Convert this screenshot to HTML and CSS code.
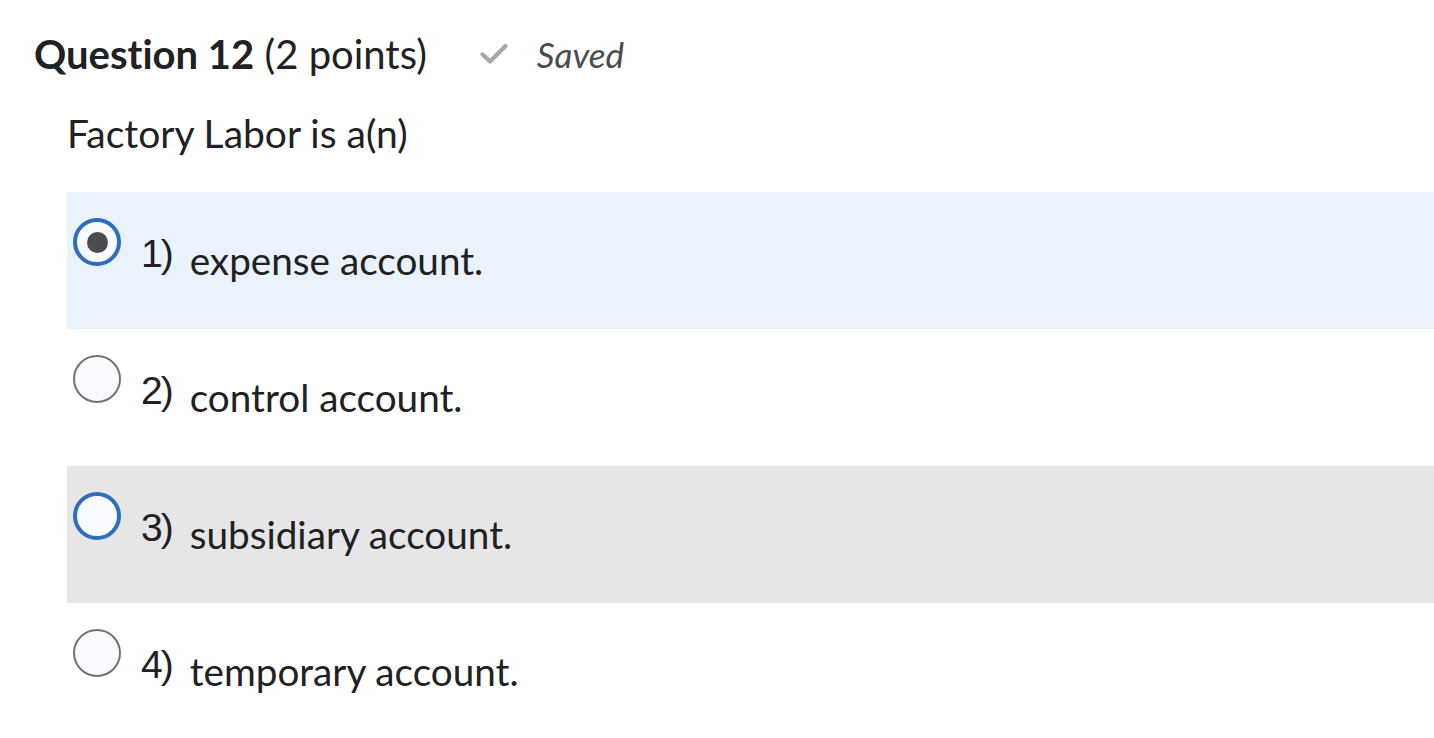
FILE: index.html
```html
<!DOCTYPE html>
<html lang="en">
<head>
  <meta charset="UTF-8">
  <title>Question 12</title>
  <link rel="stylesheet" href="styles.css">
</head>
<body>
  <div class="question">
    <div class="question-head">
      <h2><strong>Question 12</strong> (2 points)</h2>
      <span class="saved">
        <svg class="check" viewBox="0 0 30 24" width="30" height="24">
          <path d="M3.5 12.5 L11 19.5 L26.5 4" fill="none" stroke="#a3a9ac" stroke-width="4.4" stroke-linecap="round" stroke-linejoin="round"/>
        </svg>
        <em>Saved</em>
      </span>
    </div>

    <div class="question-body">
      <p class="prompt">Factory Labor is a(n)</p>

      <div class="choices">
        <div class="choice selected">
          <span class="radio checked"></span>
          <span class="num">1)</span>
          <span class="label">expense account.</span>
        </div>
        <div class="choice">
          <span class="radio"></span>
          <span class="num">2)</span>
          <span class="label">control account.</span>
        </div>
        <div class="choice hover">
          <span class="radio focus"></span>
          <span class="num">3)</span>
          <span class="label">subsidiary account.</span>
        </div>
        <div class="choice">
          <span class="radio"></span>
          <span class="num">4)</span>
          <span class="label">temporary account.</span>
        </div>
      </div>
    </div>
  </div>
</body>
</html>
```

FILE: styles.css
```css
body {
  margin: 0;
  background: #fff;
  color: #202122;
  font-family: Lato, "Open Sans", sans-serif;
  font-variant-ligatures: none;
}
.question {
  padding: 26px 0 0 34px;
}
.question-head {
  display: flex;
  align-items: center;
  gap: 52px;
}
.question-head h2 {
  margin: 0;
  font-size: 40px;
  font-weight: 400;
  line-height: 56px;
}
.question-head strong {
  font-weight: 700;
}
.saved {
  display: flex;
  align-items: center;
  gap: 28px;
  color: #494c4e;
  font-size: 35px;
}
.saved em {
  font-style: italic;
}
.question-body {
  padding-left: 33px;
}
.prompt {
  margin: 23px 0 31px;
  font-size: 39px;
  line-height: 56px;
}
.choice {
  display: flex;
  align-items: flex-start;
  height: 137px;
  box-sizing: border-box;
  padding: 26px 6px 0;
}
.choice.selected {
  background: #eaf2fc;
}
.choice.hover {
  background: #e6e6e6;
}
.radio {
  flex: none;
  width: 48px;
  height: 48px;
  box-sizing: border-box;
  border: 2px solid #6e7377;
  border-radius: 50%;
  background: #f9fbff;
  display: flex;
  align-items: center;
  justify-content: center;
}
.radio.checked,
.radio.focus {
  border: 4px solid #2d6fbd;
}
.radio.checked::after {
  content: "";
  width: 21px;
  height: 21px;
  border-radius: 50%;
  background: #494c4e;
}
.num {
  margin: 12px 0 0 20px;
  font-family: "Liberation Sans", Arial, sans-serif;
  font-size: 39px;
  letter-spacing: -2px;
  line-height: 48px;
}
.label {
  margin: 14px 0 0 18px;
  font-size: 38.7px;
  line-height: 56px;
}
```
